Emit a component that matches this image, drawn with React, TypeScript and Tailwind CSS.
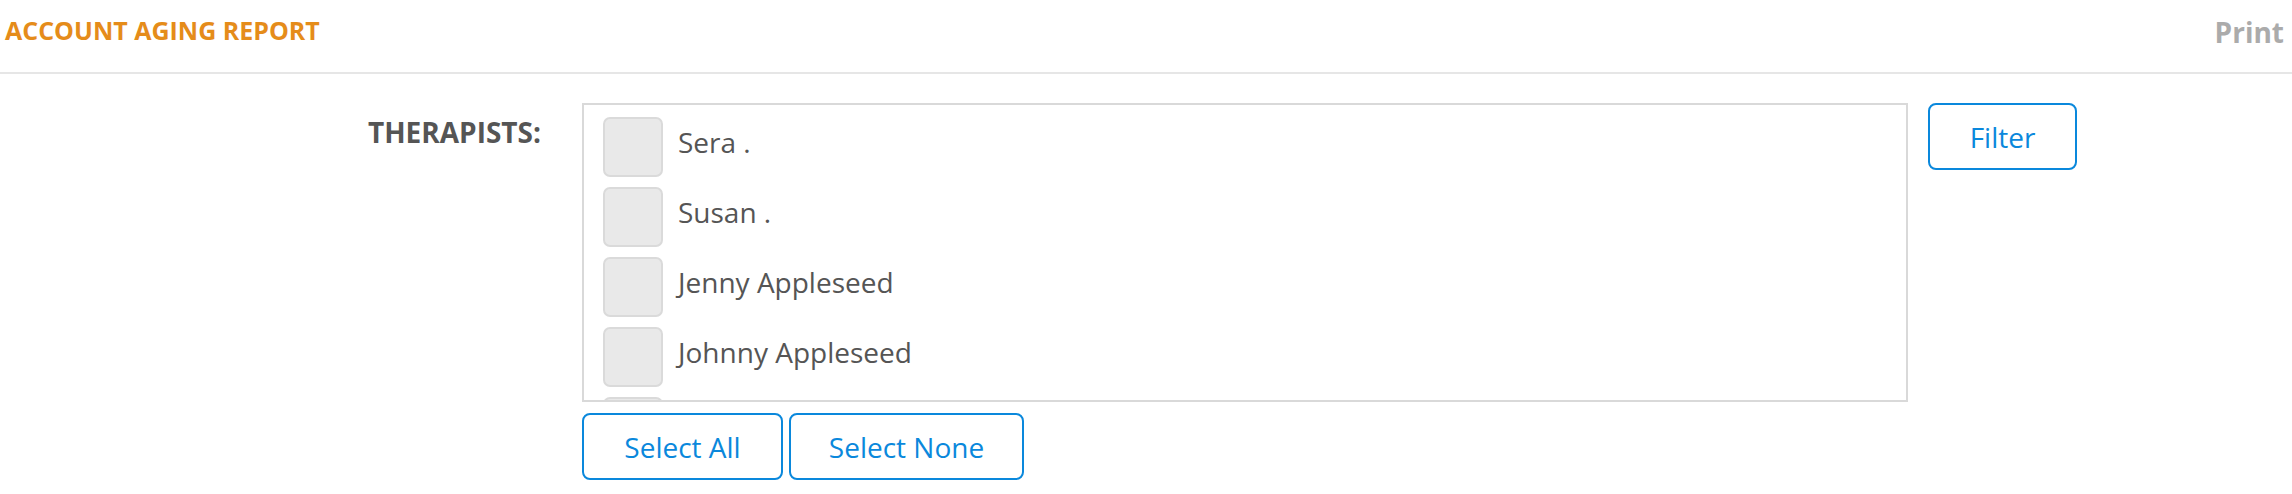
import React from 'react';

const therapists = ['Sera .', 'Susan .', 'Jenny Appleseed', 'Johnny Appleseed'];

interface OutlineButtonProps {
  label: string;
  className?: string;
}

const OutlineButton: React.FC<OutlineButtonProps> = ({ label, className = '' }) => (
  <button
    type="button"
    className={`flex h-[67px] items-center justify-center rounded-[8px] border-2 border-[#0a88dc] bg-white text-[28px] font-medium leading-none text-[#0a88dc] ${className}`}
  >
    {label}
  </button>
);

const App: React.FC = () => {
  return (
    <div className="min-h-[494px] w-full bg-white font-['Open_Sans',sans-serif]">
      {/* Page header */}
      <div className="flex h-[74px] items-start justify-between border-b-2 border-[#e6e6e6] pl-[5px] pr-[8px] pt-[18px]">
        <h1 className="text-[25px] font-bold leading-none text-[#e58c1a]">ACCOUNT AGING REPORT</h1>
        <span className="text-[28px] font-bold leading-none text-[#ababab]">Print</span>
      </div>

      {/* Filter form */}
      <div className="flex items-start pt-[29px]">
        <div className="flex w-[582px] justify-end pr-[41px] pt-[15px]">
          <label className="text-[28px] font-bold leading-none text-[#555555]">THERAPISTS:</label>
        </div>

        <div className="flex flex-col">
          <div className="h-[299px] w-[1326px] overflow-hidden border-2 border-[#d9d9d9] pl-[19px] pt-[12px]">
            <div className="flex flex-col gap-[10px]">
              {therapists.map((name) => (
                <div key={name} className="flex items-start gap-[15px]">
                  <span className="h-[60px] w-[60px] shrink-0 rounded-[7px] border-2 border-[#dadada] bg-[#e9e9e9]" />
                  <span className="pt-[11px] text-[28px] leading-none text-[#555555]">{name}</span>
                </div>
              ))}
              {/* next row, scrolled out of view */}
              <span className="h-[60px] w-[60px] shrink-0 rounded-[7px] border-2 border-[#dadada] bg-[#e9e9e9]" />
            </div>
          </div>

          <div className="mt-[11px] flex gap-[6px]">
            <OutlineButton label="Select All" className="w-[201px]" />
            <OutlineButton label="Select None" className="w-[235px]" />
          </div>
        </div>

        <OutlineButton label="Filter" className="ml-[20px] w-[149px]" />
      </div>
    </div>
  );
};

export default App;
